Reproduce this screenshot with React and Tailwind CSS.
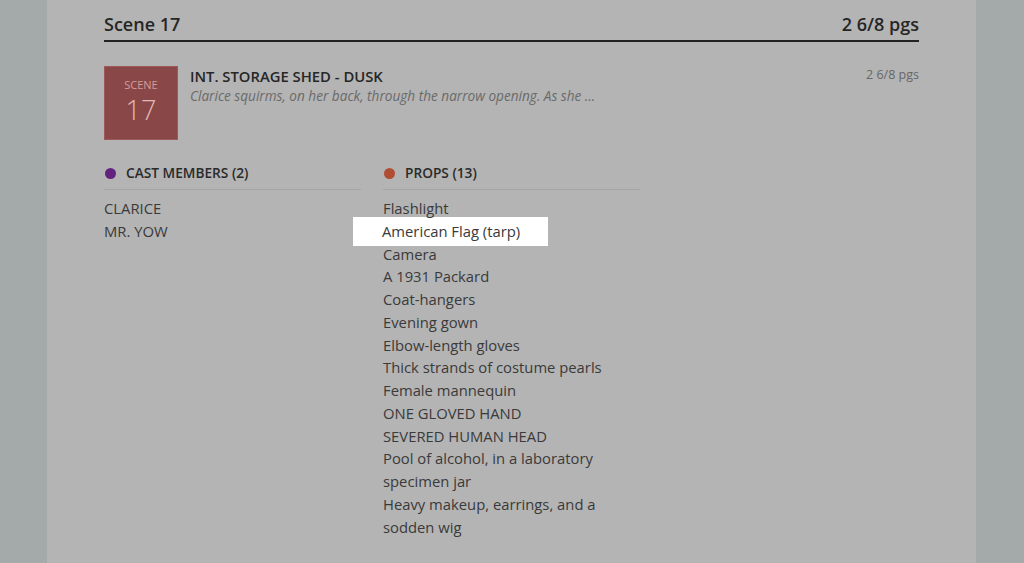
const cast = ["CLARICE", "MR. YOW"];

const props = [
  "Flashlight",
  "American Flag (tarp)",
  "Camera",
  "A 1931 Packard",
  "Coat-hangers",
  "Evening gown",
  "Elbow-length gloves",
  "Thick strands of costume pearls",
  "Female mannequin",
  "ONE GLOVED HAND",
  "SEVERED HUMAN HEAD",
  "Pool of alcohol, in a laboratory specimen jar",
  "Heavy makeup, earrings, and a sodden wig",
];

const ElementGroup = ({ title, color, items, highlight }) => (
  <div className="w-[257px]">
    <div className="flex items-center gap-[10px] border-b border-[#a4a4a4] pb-[6px] pl-[1px]">
      <span className={`h-[11px] w-[11px] rounded-full ${color}`} />
      <span className="text-[13.7px] font-semibold leading-[20px] text-[#2a2a2a]">
        {title}
      </span>
    </div>
    <ul className="mt-[7px] text-[14.8px] leading-[22.75px] text-[#3a3a3a]">
      {items.map((item) =>
        item === highlight ? (
          <li
            key={item}
            className="-my-[3px] -ml-[30px] w-fit bg-white py-[3px] pl-[29px] pr-[28px]"
          >
            {item}
          </li>
        ) : (
          <li key={item}>{item}</li>
        )
      )}
    </ul>
  </div>
);

const App = () => {
  return (
    <div
      className="flex h-[563px] w-[1024px] overflow-hidden bg-[#a3aaa9]"
      style={{ fontFamily: '"Open Sans", sans-serif' }}
    >
      <div className="ml-[47px] w-[929px] bg-[#b4b4b4] px-[57px]">
        {/* scene header */}
        <div className="flex items-end justify-between border-b-2 border-[#222] pb-[4px] pt-[12px] text-[18px] font-semibold leading-[24px] text-[#262626]">
          <span>Scene 17</span>
          <span>2 6/8 pgs</span>
        </div>

        {/* scene row */}
        <div className="mt-[24px] flex">
          <div className="flex h-[74px] w-[74px] flex-col items-center border border-[#9d5959] bg-[#894747] pt-[12px]">
            <span className="text-[11px] leading-[12px] text-[#d59c9c]">SCENE</span>
            <span className="mt-[5px] text-[27px] font-light leading-none text-[#e2b7b7]">17</span>
          </div>
          <div className="ml-[12px] flex-1">
            <div className="text-[14.8px] font-semibold leading-[20px] text-[#262626]">
              INT. STORAGE SHED - DUSK
            </div>
            <div className="text-[13.6px] italic leading-[20px] text-[#6a6a6a]">
              Clarice squirms, on her back, through the narrow opening. As she ...
            </div>
          </div>
          <div className="text-[12.5px] leading-[18px] text-[#666]">2 6/8 pgs</div>
        </div>

        {/* elements */}
        <div className="mt-[23px] flex gap-[22px]">
          <ElementGroup title="CAST MEMBERS (2)" color="bg-[#62237e]" items={cast} />
          <ElementGroup
            title="PROPS (13)"
            color="bg-[#b04e34]"
            items={props}
            highlight="American Flag (tarp)"
          />
        </div>
      </div>
    </div>
  );
};

export default App;
